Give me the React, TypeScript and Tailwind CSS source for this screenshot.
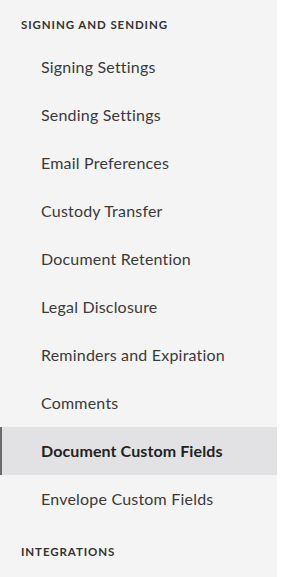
import React from 'react';

const items = [
  'Signing Settings',
  'Sending Settings',
  'Email Preferences',
  'Custody Transfer',
  'Document Retention',
  'Legal Disclosure',
  'Reminders and Expiration',
  'Comments',
  'Document Custom Fields',
  'Envelope Custom Fields',
];

const active = 'Document Custom Fields';

export default function App() {
  return (
    <div className="flex h-[577px] w-[288px] bg-white" style={{ fontFamily: 'Lato, "Noto Sans", sans-serif' }}>
      <nav className="flex w-[277px] flex-col bg-[#f4f4f4]">
        <div className="flex h-[44px] items-center pl-[21px] pt-[6px] text-[11.5px] font-bold uppercase tracking-[0.08em] text-[#333]">
          Signing and Sending
        </div>
        <ul className="flex flex-col">
          {items.map((item) => {
            const isActive = item === active;
            return (
              <li
                key={item}
                className={
                  isActive
                    ? 'flex h-[48px] items-center border-l-2 border-[#6b6b6b] bg-[#e2e2e4] pl-[39px] pt-[1px] text-[16px] font-bold tracking-[0.1px] text-[#222]'
                    : 'flex h-[48px] items-center pl-[41px] pt-[1px] text-[16px] tracking-[0.2px] text-[#3a3a3a]'
                }
              >
                {item}
              </li>
            );
          })}
        </ul>
        <div className="flex h-[56px] items-center pl-[21px] pt-[4px] text-[11.5px] font-bold uppercase tracking-[0.08em] text-[#333]">
          Integrations
        </div>
      </nav>
    </div>
  );
}
